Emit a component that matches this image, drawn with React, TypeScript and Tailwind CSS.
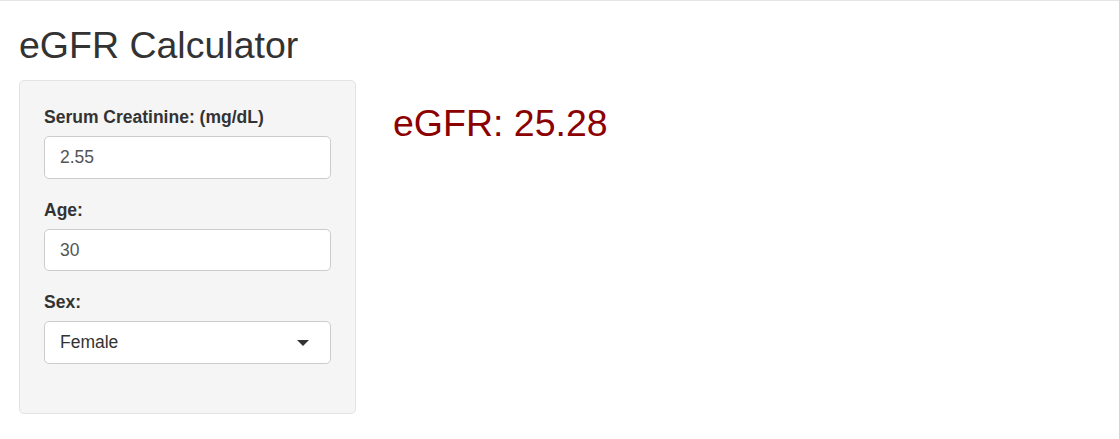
export default function App() {
  return (
    <div className="min-h-[439px] border-t border-[#e5e5e5] bg-white px-[19px] font-['Liberation_Sans',Arial,sans-serif] text-[#333]">
      <h2 className="mt-[24px] mb-[14px] text-[37.5px] leading-[1.1] font-normal">
        eGFR Calculator
      </h2>
      <div className="flex items-start">
        <div className="w-[337px] shrink-0 rounded-[5px] border border-[#e3e3e3] bg-[#f5f5f5] px-[24px] pt-[24px] pb-[49px]">
          <Field label="Serum Creatinine: (mg/dL)" value="2.55" />
          <Field label="Age:" value="30" />
          <div>
            <div className="mb-[6px] text-[17.5px] leading-[25px] font-bold">Sex:</div>
            <div className="flex h-[42.5px] items-center justify-between rounded-[5px] border border-[#ccc] bg-white pr-[21px] pl-[15px] text-[17.5px] text-[#333]">
              <span>Female</span>
              <span className="h-0 w-0 border-x-[6px] border-t-[6px] border-x-transparent border-t-[#333]" />
            </div>
          </div>
        </div>
        <div className="pl-[37px]">
          <div className="mt-[23px] text-[37.5px] leading-[1.1] text-[#8b0000]">
            eGFR: 25.28
          </div>
        </div>
      </div>
    </div>
  );
}

function Field({ label, value }: { label: string; value: string }) {
  return (
    <div className="mb-[19px]">
      <div className="mb-[6px] text-[17.5px] leading-[25px] font-bold">{label}</div>
      <div className="flex h-[42.5px] items-center rounded-[5px] border border-[#ccc] bg-white px-[15px] text-[17.5px] text-[#555]">
        {value}
      </div>
    </div>
  );
}
